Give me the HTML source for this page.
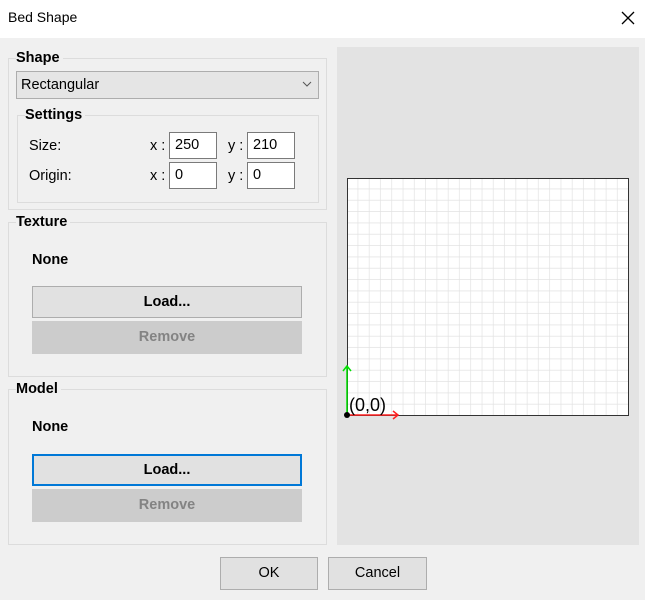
<!DOCTYPE html>
<html><head><style>
body{margin:0;width:645px;height:600px;background:#f0f0f0;font-family:"Liberation Sans",sans-serif;font-size:14.5px;color:#000;position:relative;overflow:hidden}
.a{position:absolute}
.title{left:0;top:0;width:645px;height:38px;background:#fff}
.box{border:1px solid #dcdcdc}
.lbl{background:#f0f0f0;font-weight:bold;padding-right:3px;line-height:16px}
.inp{background:#fff;border:1px solid #7a7a7a;box-sizing:border-box;line-height:25px;padding-left:5px}
.btn{box-sizing:border-box;background:#e1e1e1;border:1px solid #adadad;text-align:center;font-weight:bold}
.dis{background:#cccccc;border:1px solid #cccccc;color:#838383}
</style></head><body>
<div class="a title"></div>
<div class="a" style="left:8px;top:9px;font-size:14px">Bed Shape</div>
<svg class="a" style="left:621px;top:11px" width="14" height="14"><path d="M1 1L13 13M13 1L1 13" stroke="#000" stroke-width="1.3"/></svg>

<div class="a box" style="left:8px;top:58px;width:317px;height:150px"></div>
<div class="a lbl" style="left:16px;top:50px">Shape</div>
<div class="a" style="left:16px;top:71px;height:26px;background:#e5e5e5;border:1px solid #adadad;line-height:26px;padding-left:4px;box-sizing:content-box;width:297px">Rectangular</div>
<svg class="a" style="left:302px;top:81px" width="10" height="6"><path d="M1 1L5 5L9 1" stroke="#555" fill="none"/></svg>
<div class="a box" style="left:17px;top:115px;width:300px;height:86px"></div>
<div class="a lbl" style="left:25px;top:107px">Settings</div>
<div class="a" style="left:29px;top:138px">Size:</div>
<div class="a" style="left:29px;top:168px">Origin:</div>
<div class="a" style="left:150px;top:138px">x :</div>
<div class="a" style="left:228px;top:138px">y :</div>
<div class="a" style="left:150px;top:168px">x :</div>
<div class="a" style="left:228px;top:168px">y :</div>
<div class="a inp" style="left:169px;top:132px;width:48px;height:27px">250</div>
<div class="a inp" style="left:247px;top:132px;width:48px;height:27px">210</div>
<div class="a inp" style="left:169px;top:162px;width:48px;height:27px">0</div>
<div class="a inp" style="left:247px;top:162px;width:48px;height:27px">0</div>

<div class="a box" style="left:8px;top:222px;width:317px;height:153px"></div>
<div class="a lbl" style="left:16px;top:214px">Texture</div>
<div class="a" style="left:32px;top:252px;font-weight:bold">None</div>
<div class="a btn" style="left:32px;top:286px;width:270px;height:32px;line-height:30px">Load...</div>
<div class="a btn dis" style="left:32px;top:321px;width:270px;height:33px;line-height:31px">Remove</div>

<div class="a box" style="left:8px;top:389px;width:317px;height:154px"></div>
<div class="a lbl" style="left:16px;top:381px">Model</div>
<div class="a" style="left:32px;top:419px;font-weight:bold">None</div>
<div class="a btn" style="left:32px;top:454px;width:270px;height:32px;line-height:28px;border:2px solid #0078d7">Load...</div>
<div class="a btn dis" style="left:32px;top:489px;width:270px;height:33px;line-height:31px">Remove</div>

<div class="a" style="left:337px;top:47px;width:302px;height:498px;background:#e3e3e3"></div>
<svg class="a" style="left:337px;top:170px" width="302" height="260">
<defs><pattern id="g" x="10" y="8" width="11.28" height="11.33" patternUnits="userSpaceOnUse"><path d="M11.28 0V11.33M0 11.33H11.28" stroke="#e2e2e2" stroke-width="1.4" fill="none"/></pattern></defs>
<rect x="10.5" y="8.5" width="281" height="237" fill="#fff"/>
<rect x="10.5" y="8.5" width="281" height="237" fill="url(#g)"/>
<rect x="10.5" y="8.5" width="281" height="237" fill="none" stroke="#333" stroke-width="1"/>
<path d="M10 245V196M6 201L10 196L14 201" stroke="#00e000" stroke-width="1.5" fill="none"/>
<path d="M10 245H61M56 241L61 245L56 249" stroke="#ff2020" stroke-width="1.5" fill="none"/>
<circle cx="10" cy="245" r="3" fill="#000"/>
<text x="12" y="241" font-family="Liberation Sans" font-size="18">(0,0)</text>
</svg>

<div class="a btn" style="left:220px;top:557px;width:98px;height:33px;line-height:31px;font-weight:normal">OK</div>
<div class="a btn" style="left:328px;top:557px;width:99px;height:33px;line-height:31px;font-weight:normal">Cancel</div>
</body></html>
